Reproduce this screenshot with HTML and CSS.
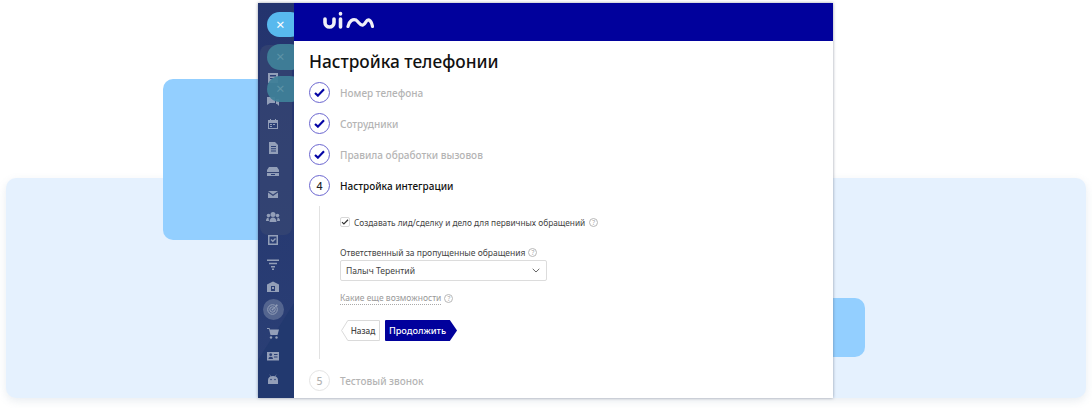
FILE: index.html
```html
<!DOCTYPE html>
<html lang="ru">
<head>
<meta charset="utf-8">
<title>Настройка телефонии</title>
<link rel="stylesheet" href="styles.css">
</head>
<body>
<div class="stage">
  <div class="bg-panel"></div>
  <div class="bg-block bg-left"></div>
  <div class="bg-block bg-right"></div>
  <div class="window">
    <aside class="sidebar">
      <div class="side-glow"></div>
      <div class="side-wedge"></div>
      <div class="side-icons">
        <svg class="ico" viewBox="0 0 12 12"><path d="M1 1h10v10H1z"/><path class="cut" d="M3 3h6v1.500H3zM3 6h3v1H3z"/></svg>
        <svg class="ico" viewBox="0 0 12 12"><path d="M0 2h8v6H3l-3 2zM9 4h3v7l-2-2H4v0h5z"/></svg>
        <svg class="ico" viewBox="0 0 12 12"><path d="M1 2h2V1h1v1h4V1h1v1h2v9H1z"/><path class="cut" d="M2 5h8v5H2z"/><path d="M3 6h2v1H3zM6 6h2v1H6zM3 8h2v1H3z"/></svg>
        <svg class="ico" viewBox="0 0 12 12"><path d="M2 0h6l3 3v9H2z"/><path class="cut" d="M4 4h5v1H4zM4 6.200h5v1H4zM4 8.400h5v1H4z"/></svg>
        <svg class="ico" viewBox="0 0 12 12"><path d="M2 2h8l2 3v2H0V5zM0 8h12v3H0z"/><path class="cut" d="M4 9h4v1H4z"/></svg>
        <svg class="ico" viewBox="0 0 12 12"><path d="M1 3h10L6 6.500zM1 4.500l5 3.500 5-3.500V10H1z"/></svg>
        <svg class="ico ico-wide" viewBox="0 0 14 12"><circle cx="7" cy="3.500" r="2.500"/><circle cx="2.500" cy="4.500" r="1.800"/><circle cx="11.500" cy="4.500" r="1.800"/><path d="M3.500 11c0-3 1.500-4.500 3.500-4.500s3.500 1.500 3.500 4.500zM0 10c0-2 1-3.500 2.500-3.500L3 10zM14 10c0-2-1-3.500-2.500-3.500L11 10z"/></svg>
        <svg class="ico" viewBox="0 0 12 12"><path d="M1 1h10v10H1z"/><path class="cut" d="M2.500 2.500h7v7h-7z"/><path d="M3.500 6l1-1 1.300 1.300L8 4l1 1-3.200 3.200z"/></svg>
        <svg class="ico" viewBox="0 0 12 12"><path d="M0 1.500h12V3H0zM2 4.700h8v1.500H2zM4 8h4v1.500H4zM5 10.500h2V12H5z"/></svg>
        <svg class="ico" viewBox="0 0 12 12"><path d="M6 .5l6 3V11H0V3.500z"/><path class="cut" d="M4 5h4v5H4z"/><path d="M5 6h2v2H5z"/></svg>
        <div class="target"><svg class="ico" viewBox="0 0 12 12"><circle class="ring" cx="5.500" cy="6.500" r="4.800"/><circle class="ring" cx="5.500" cy="6.500" r="2.700"/><circle cx="5.500" cy="6.500" r="1"/><path d="M9 1l1 1 1-.5-.5 1.500-1 .5-3.500 3-.4-.4 3.300-3.300z"/></svg></div>
        <svg class="ico" viewBox="0 0 12 12"><path d="M0 1h2.500l.5 1.500h9L10.500 8H3.500L2 2H0z"/><circle cx="4" cy="10.500" r="1.200"/><circle cx="9.500" cy="10.500" r="1.200"/></svg>
        <svg class="ico" viewBox="0 0 12 12"><path d="M0 2h12v8.500H0z"/><path class="cut" d="M7 4h3.500v1H7zM7 6.500h3.500v1H7z"/><circle class="cut" cx="3.700" cy="4.700" r="1.400"/><path class="cut" d="M1.500 9c0-1.500 1-2.300 2.200-2.300S6 7.500 6 9z"/></svg>
        <svg class="ico" viewBox="0 0 12 12"><path d="M1 11V7c0-2.500 2.200-4 5-4s5 1.500 5 4v4z"/><path d="M2.500 1l1.500 2.500-.7.3zM9.500 1L8 3.500l.7.300z"/><circle class="cut" cx="4" cy="6.500" r=".8"/><circle class="cut" cx="8" cy="6.500" r=".8"/></svg>
      </div>
      <div class="pill pill-top">×</div>
      <div class="pill pill-a">×</div>
      <div class="pill pill-b">×</div>
    </aside>
    <div class="content">
      <header class="topbar">
        <svg class="logo" viewBox="0 0 52 18"><g fill="none" stroke="#f1f0f8" stroke-width="3.600" stroke-linecap="round"><path d="M3 8v3.500a4.500 4.500 0 0 0 9 0V8M18.500 8v8M18.500 2.500v.5"/><path stroke-width="3.200" d="M26 15.500C27 10 31 7.500 34 9c3 2 4 6 7 5s3-6 6-5c2 1 3 4 3.500 6.500"/></g></svg>
      </header>
      <main class="main">
        <h1 class="title">Настройка телефонии</h1>
        <ol class="steps">
          <li class="step step-done"><span class="badge"><svg class="tick" viewBox="0 0 12 10"><path d="M1 5.500l3.200 3L11 1.500" fill="none" stroke="#0505a5" stroke-width="2.400"/></svg></span><span class="step-name">Номер телефона</span></li>
          <li class="step step-done"><span class="badge"><svg class="tick" viewBox="0 0 12 10"><path d="M1 5.500l3.200 3L11 1.500" fill="none" stroke="#0505a5" stroke-width="2.400"/></svg></span><span class="step-name">Сотрудники</span></li>
          <li class="step step-done"><span class="badge"><svg class="tick" viewBox="0 0 12 10"><path d="M1 5.500l3.200 3L11 1.500" fill="none" stroke="#0505a5" stroke-width="2.400"/></svg></span><span class="step-name">Правила обработки вызовов</span></li>
          <li class="step step-current"><span class="badge">4</span><span class="step-name">Настройка интеграции</span></li>
        </ol>
        <section class="details">
          <label class="check-row">
            <span class="checkbox"><svg class="check-mark" viewBox="0 0 10 8"><path d="M1 4.200l2.500 2.300L9 1" fill="none" stroke="#333" stroke-width="1.600"/></svg></span>
            <span>Создавать лид/сделку и дело для первичных обращений</span>
            <span class="help">?</span>
          </label>
          <div class="field-label"><span>Ответственный за пропущенные обращения</span><span class="help">?</span></div>
          <div class="select"><span>Палыч Терентий</span><svg class="chev" viewBox="0 0 8 5"><path d="M.7.8L4 4 7.300.8" fill="none" stroke="#666" stroke-width="1"/></svg></div>
          <div class="more"><span class="more-link">Какие еще возможности</span><span class="help">?</span></div>
          <div class="actions">
            <button class="btn-back" type="button"><svg class="back-shape" viewBox="0 0 40 21" preserveAspectRatio="none"><path d="M7 .5h32.500v20H7L.6 10.500z" fill="#fff" stroke="#d9d9d9"/></svg><span class="back-label">Назад</span></button>
            <button class="btn-next" type="button">Продолжить</button>
          </div>
        </section>
        <div class="step step-todo"><span class="badge">5</span><span class="step-name">Тестовый звонок</span></div>
      </main>
    </div>
  </div>
</div>
</body>
</html>
```
FILE: styles.css
```css
* { box-sizing: border-box; }
html, body { margin: 0; padding: 0; background: #fff; }
body { font-family: "Noto Sans", "Open Sans", sans-serif; color: #222; overflow: hidden; }
.stage { position: relative; width: 1092px; height: 408px; overflow: hidden; }

.bg-panel {
  position: absolute; left: 6px; top: 178px; width: 1080px; height: 220px;
  background: #e5f1fe; border-radius: 10px;
  box-shadow: 0 3px 8px rgba(120, 140, 170, .16);
}
.bg-block { position: absolute; background: #93cfff; border-radius: 10px; }
.bg-left { left: 163px; top: 79px; width: 120px; height: 161px; }
.bg-right { left: 800px; top: 298px; width: 65px; height: 59px; }

.window {
  position: absolute; left: 258px; top: 3px; width: 575px; height: 395px;
  display: flex; background: #fff;
  box-shadow: 0 0 3px rgba(70, 80, 100, .55);
}

.sidebar {
  position: relative; flex: 0 0 36px; overflow: hidden;
  background: linear-gradient(180deg, #24346e 0%, #2a3f75 100%);
}
.side-glow {
  position: absolute; left: 2px; top: 42px; width: 32px; height: 190px;
  background: rgba(60, 75, 115, .55); border-radius: 8px;
}
.side-wedge {
  position: absolute; left: 0; bottom: 0; width: 36px; height: 95px;
  background: #22396f; clip-path: polygon(0 60%, 100% 0, 100% 100%, 0 100%);
}
.pill {
  position: absolute; left: 9px; width: 36px; height: 25px; border-radius: 13px;
  padding-left: 9px; font-size: 15px; line-height: 24px; text-align: left; color: #fff;
}
.pill-top { top: 9px; background: #58b9ee; }
.pill-a { top: 41px; background: rgba(63, 127, 152, .94); color: #5d93a6; height: 26px; }
.pill-b { top: 73px; background: rgba(63, 127, 152, .94); color: #5d93a6; height: 26px; }

.side-icons {
  position: relative; display: flex; flex-direction: column; align-items: center;
  padding: 69px 6px 0 0; gap: 11.2px;
}
.ico { display: block; width: 12px; height: 12px; fill: #939fb8; flex: none; }
.ico-wide { width: 14px; }
.cut { fill: #2c4076; }
.ring { fill: none; stroke: #939fb8; stroke-width: 1; }
.target {
  width: 21px; height: 21px; border-radius: 50%; background: #54658f;
  display: flex; align-items: center; justify-content: center; margin: -5px 0 -4px;
}

.content { flex: 1; display: flex; flex-direction: column; min-width: 0; }
.topbar { flex: 0 0 38px; background: #01019c; display: flex; align-items: center; padding-left: 28px; }
.logo { display: block; width: 52px; height: 18px; margin-bottom: 4px; }

.main { flex: 1; padding: 9px 0 0 15px; }
.title { margin: 0 0 8px; font-size: 17.3px; line-height: 24px; font-weight: 500; color: #111; }

.steps { list-style: none; margin: 0; padding: 0; display: flex; flex-direction: column; gap: 10px; }
.step { display: flex; align-items: center; gap: 10px; height: 21px; }
.badge {
  flex: 0 0 21px; width: 21px; height: 21px; border-radius: 50%;
  border: 1px solid #6b66d0; background: #fff;
  display: flex; align-items: center; justify-content: center;
  font-size: 10.5px; font-weight: 500; color: #222;
}
.tick { display: block; width: 11px; height: 9px; }
.step-name { font-size: 10px; color: #b4b4b4; font-weight: 500; }
.step-current .step-name { color: #111; }
.step-todo { margin-top: 11px; }
.step-todo .badge { border-color: #e4e4e4; color: #b4b4b4; }

.details {
  margin: 10px 0 0 10px; padding: 9px 0 0 20px; height: 153px;
  border-left: 1px solid #e2e2e2;
}
.check-row { display: flex; align-items: center; gap: 4px; height: 14px; font-size: 8.3px; color: #444; }
.checkbox {
  width: 10px; height: 10px; border: 1px solid #d8d8d8; border-radius: 2px; background: #fff;
  display: flex; align-items: center; justify-content: center; flex: none;
}
.check-mark { width: 8px; height: 6px; display: block; }
.help {
  width: 9px; height: 9px; border: 1px solid #b8b8b8; border-radius: 50%; color: #aaa;
  font-size: 6.5px; line-height: 7px; text-align: center; flex: none;
}
.field-label { display: flex; align-items: center; gap: 3px; margin-top: 16px; height: 14px; font-size: 8.5px; color: #444; }
.select {
  margin-top: 1px; width: 207px; height: 21px; padding: 0 6px 0 5px;
  border: 1px solid #dcdcdc; border-radius: 2px; background: #fff;
  display: flex; align-items: center; justify-content: space-between;
  font-size: 8.6px; color: #444;
}
.chev { width: 8px; height: 5px; display: block; }
.more { display: flex; align-items: center; gap: 3px; margin-top: 10px; height: 14px; font-size: 8.5px; color: #999; }
.more-link { border-bottom: 1px dotted #aaa; line-height: 12px; }
.actions { display: flex; gap: 5px; margin: 15px 0 0 1px; }
.btn-back {
  position: relative; width: 39px; height: 21px; padding: 0 0 0 5px; border: 0; background: none;
  font: 500 8.2px "Noto Sans", sans-serif; color: #444;
}
.back-shape { position: absolute; left: 0; top: 0; width: 100%; height: 100%; }
.back-label { position: relative; }
.btn-next {
  width: 72px; height: 21px; padding: 0 7px 0 0; border: 0; background: #01019c; color: #fff;
  font: 500 9.2px "Noto Sans", sans-serif;
  clip-path: polygon(0 0, 90% 0, 100% 50%, 90% 100%, 0 100%);
  border-radius: 1px;
}
```
